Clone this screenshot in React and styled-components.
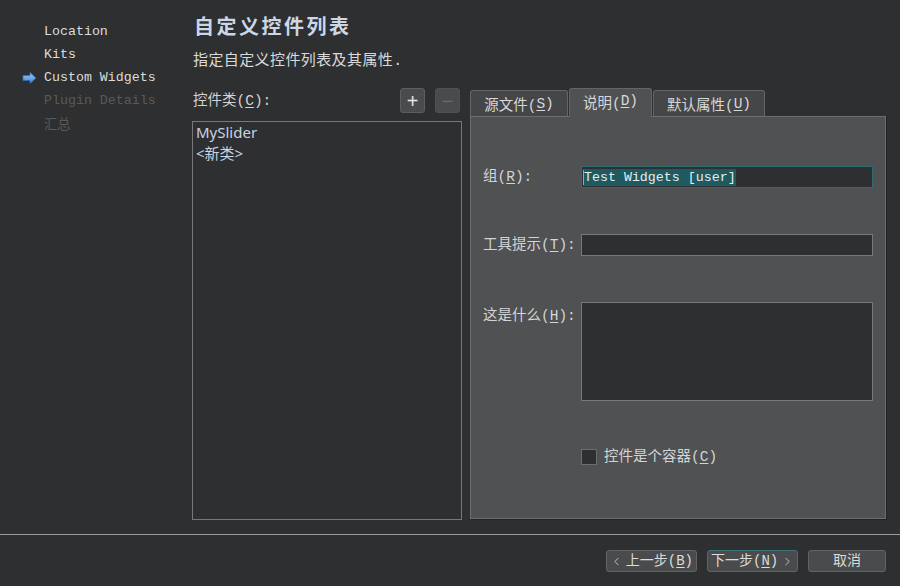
import React from 'react'
import styled, { createGlobalStyle } from 'styled-components'
import { ChevronLeft, ChevronRight } from 'lucide-react'

const GlobalStyle = createGlobalStyle`
    html, body {
        margin: 0;
        padding: 0;
        background: #2e2f31;
    }
    body {
        font-family: "Liberation Mono", "Noto Sans CJK SC", monospace;
        color: #d4d4d4;
    }
`

const Window = styled.div`
    width: 900px;
    height: 586px;
    display: flex;
    flex-direction: column;
    background: #2e2f31;
    overflow: hidden;
`

const Main = styled.div`
    display: flex;
    height: 534px;
`

const Nav = styled.ul`
    list-style: none;
    margin: 0;
    padding: 20px 0 0 0;
    width: 192px;
    flex-shrink: 0;
`

const NavItem = styled.li`
    display: flex;
    align-items: center;
    height: 23px;
    padding-left: 22px;
    font-size: 13.3px;
    color: ${p => (p.$disabled ? '#58595b' : '#dcdcdc')};
`

const NavMarker = styled.span`
    width: 22px;
    display: flex;
    align-items: center;
`

const Content = styled.div`
    flex: 1;
    display: flex;
    flex-direction: column;
    padding: 12px 14px 0 0;
`

const Title = styled.h1`
    margin: 0 0 0 2px;
    font: 700 20px/28px "Noto Sans CJK SC", sans-serif;
    letter-spacing: 2.5px;
    color: #cdd6e4;
`

const Subtitle = styled.p`
    margin: 12px 0 0 1px;
    font-size: 15px;
    line-height: 20px;
    letter-spacing: 0.4px;
    color: #dadada;
`

const Columns = styled.div`
    display: flex;
    gap: 8px;
    margin-top: 16px;
`

const ClassColumn = styled.div`
    width: 270px;
    display: flex;
    flex-direction: column;
`

const ClassHeader = styled.div`
    display: flex;
    align-items: center;
    height: 25px;
    padding: 0 2px 0 1px;
`

const Label = styled.span`
    flex: ${p => (p.$grow ? 1 : 'none')};
    font-size: 14.5px;
    line-height: 20px;
    color: #d4d4d4;
    white-space: nowrap;

    u {
        text-underline-offset: 2px;
    }
`

const ToolButton = styled.button`
    width: 25px;
    height: 25px;
    margin-left: 10px;
    padding: 0;
    display: flex;
    align-items: center;
    justify-content: center;
    background: #4a4b4d;
    border: 1px solid ${p => (p.disabled ? '#4f5052' : '#5d5e60')};
    border-radius: 3px;
    color: ${p => (p.disabled ? '#6a6b6d' : '#e6e6e6')};
    font: 400 20px/1 "Liberation Sans", sans-serif;
`

const ClassList = styled.ul`
    list-style: none;
    margin: 8px 0 0;
    padding: 0 3px;
    height: 399px;
    box-sizing: border-box;
    border: 1px solid #77787a;
    background: #2e2f31;
    font: 15px/21px "Noto Sans", "Noto Sans CJK SC", sans-serif;
    color: #c9d3e3;
`

const TabColumn = styled.div`
    width: 416px;
    display: flex;
    flex-direction: column;
`

const TabBar = styled.div`
    display: flex;
    align-items: flex-end;
    gap: 1px;
    height: 28px;
`

const Tab = styled.div`
    position: relative;
    z-index: ${p => (p.$active ? 2 : 1)};
    box-sizing: border-box;
    width: ${p => p.$width}px;
    height: ${p => (p.$active ? 29 : 26)}px;
    margin-bottom: ${p => (p.$active ? -1 : 0)}px;
    display: flex;
    align-items: center;
    justify-content: center;
    padding-bottom: ${p => (p.$active ? 4 : 0)}px;
    background: ${p => (p.$active ? '#505153' : '#454648')};
    border: 1px solid #646567;
    border-bottom: none;
    border-radius: 3px 3px 0 0;
    font-size: 14.5px;
    color: #d8d8d8;
    white-space: nowrap;

    u {
        text-underline-offset: 2px;
    }
`

const TabPanel = styled.div`
    height: 403px;
    box-sizing: border-box;
    padding: 49px 12px 0 12px;
    background: #505153;
    border: 1px solid #6c6d6f;
    box-shadow: 1px 1px 0 #222325;
    display: flex;
    flex-direction: column;
`

const FormRow = styled.div`
    display: flex;
    align-items: ${p => (p.$top ? 'flex-start' : 'center')};
    margin-top: ${p => p.$gap || 0}px;
`

const RowLabel = styled(Label)`
    width: 98px;
    flex-shrink: 0;
    padding-top: ${p => (p.$top ? 4 : 0)}px;
`

const Field = styled.div`
    flex: 1;
    height: ${p => p.$height || 22}px;
    box-sizing: border-box;
    display: flex;
    align-items: ${p => (p.$height ? 'flex-start' : 'center')};
    padding: 0 1px;
    background: #2e2f31;
    border: 1px solid ${p => (p.$focused ? '#2e6b71' : '#77787a')};
    font-size: 13.3px;
    color: #ececec;
`

const Selection = styled.span`
    position: relative;
    background: #1d5a61;
    line-height: 17px;
    padding-left: 1px;

    &::before {
        content: '';
        position: absolute;
        left: 0;
        top: 1px;
        bottom: 1px;
        width: 1px;
        background: #e08a8a;
    }
`

const Checkbox = styled.span`
    width: 16px;
    height: 16px;
    box-sizing: border-box;
    margin-left: 98px;
    margin-right: 7px;
    background: #2e2f31;
    border: 1px solid #6c6d6f;
`

const Footer = styled.div`
    flex: 1;
    display: flex;
    justify-content: flex-end;
    align-items: flex-start;
    gap: 10px;
    padding: 15px 14px 0 0;
    border-top: 1px solid #9b9c9e;
`

const DialogButton = styled.button`
    width: ${p => p.$width}px;
    height: 22px;
    box-sizing: border-box;
    display: flex;
    align-items: center;
    justify-content: ${p => (p.$center ? 'center' : 'space-between')};
    padding: 0 3px;
    background: #4a4b4d;
    border: 1px solid ${p => (p.$default ? '#3d7278' : '#626365')};
    border-radius: 3px;
    font: 14px/1 "Liberation Mono", "Noto Sans CJK SC", monospace;
    color: #dcdcdc;
    white-space: nowrap;

    u {
        text-underline-offset: 2px;
    }
`

const Arrow = () => (
    <svg width="15" height="12" viewBox="0 0 15 12">
        <defs>
            <linearGradient id="navArrow" x1="0" y1="0" x2="0" y2="1">
                <stop offset="0" stopColor="#9cc8f6" />
                <stop offset="1" stopColor="#3f86d8" />
            </linearGradient>
        </defs>
        <path d="M1 3.5 H8 V0.5 L14 6 L8 11.5 V8.5 H1 Z" fill="url(#navArrow)" stroke="#2f6fb8" strokeWidth="0.8" />
    </svg>
)

const steps = [
    { name: 'Location' },
    { name: 'Kits' },
    { name: 'Custom Widgets', current: true },
    { name: 'Plugin Details', disabled: true },
    { name: '汇总', disabled: true },
]

const Mnemonic = ({ text, k }) => (
    <>
        {text}(<u>{k}</u>)
    </>
)

const App = () => {
    return (
        <Window>
            <GlobalStyle />
            <Main>
                <Nav>
                    {steps.map(s => (
                        <NavItem key={s.name} $disabled={s.disabled}>
                            <NavMarker>{s.current && <Arrow />}</NavMarker>
                            {s.name}
                        </NavItem>
                    ))}
                </Nav>
                <Content>
                    <Title>自定义控件列表</Title>
                    <Subtitle>指定自定义控件列表及其属性.</Subtitle>
                    <Columns>
                        <ClassColumn>
                            <ClassHeader>
                                <Label $grow>
                                    <Mnemonic text="控件类" k="C" />:
                                </Label>
                                <ToolButton>+</ToolButton>
                                <ToolButton disabled>−</ToolButton>
                            </ClassHeader>
                            <ClassList>
                                <li>MySlider</li>
                                <li>&lt;新类&gt;</li>
                            </ClassList>
                        </ClassColumn>
                        <TabColumn>
                            <TabBar>
                                <Tab $width={98}>
                                    <Mnemonic text="源文件" k="S" />
                                </Tab>
                                <Tab $width={83} $active>
                                    <Mnemonic text="说明" k="D" />
                                </Tab>
                                <Tab $width={112}>
                                    <Mnemonic text="默认属性" k="U" />
                                </Tab>
                            </TabBar>
                            <TabPanel>
                                <FormRow>
                                    <RowLabel>
                                        <Mnemonic text="组" k="R" />:
                                    </RowLabel>
                                    <Field $focused>
                                        <Selection>Test Widgets [user]</Selection>
                                    </Field>
                                </FormRow>
                                <FormRow $gap={46}>
                                    <RowLabel>
                                        <Mnemonic text="工具提示" k="T" />:
                                    </RowLabel>
                                    <Field />
                                </FormRow>
                                <FormRow $gap={46} $top>
                                    <RowLabel $top>
                                        <Mnemonic text="这是什么" k="H" />:
                                    </RowLabel>
                                    <Field $height={99} />
                                </FormRow>
                                <FormRow $gap={46}>
                                    <Checkbox />
                                    <Label>
                                        <Mnemonic text="控件是个容器" k="C" />
                                    </Label>
                                </FormRow>
                            </TabPanel>
                        </TabColumn>
                    </Columns>
                </Content>
            </Main>
            <Footer>
                <DialogButton $width={91}>
                    <ChevronLeft size={13} strokeWidth={1.5} />
                    <span>
                        <Mnemonic text="上一步" k="B" />
                    </span>
                </DialogButton>
                <DialogButton $width={91} $default>
                    <span>
                        <Mnemonic text="下一步" k="N" />
                    </span>
                    <ChevronRight size={13} strokeWidth={1.5} />
                </DialogButton>
                <DialogButton $width={78} $center>
                    取消
                </DialogButton>
            </Footer>
        </Window>
    )
}

export default App
